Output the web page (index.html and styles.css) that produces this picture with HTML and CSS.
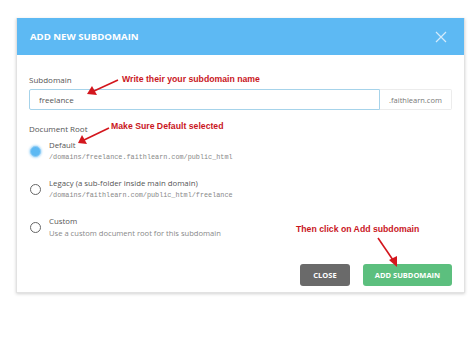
FILE: index.html
```html
<!DOCTYPE html>
<html lang="en">
<head>
    <meta charset="UTF-8">
    <meta name="viewport" content="width=device-width, initial-scale=1.0">
    <title>Add New Subdomain</title>
    <link rel="stylesheet" href="styles.css">
</head>
<body>
    <div class="page">
        <div class="modal">
            <div class="modal-header">
                <h2>Add New Subdomain</h2>
                <svg class="close-icon" width="12" height="12" viewBox="0 0 12 12">
                    <path d="M1 1 L11 11 M11 1 L1 11" stroke="#d4ebfb" stroke-width="1.2" fill="none"/>
                </svg>
            </div>
            <div class="modal-body">
                <label class="field-label" for="subdomain">Subdomain</label>
                <div class="input-group">
                    <input type="text" id="subdomain" value="freelance">
                    <span class="suffix">.faithlearn.com</span>
                </div>

                <div class="field-label root-label">Document Root</div>
                <div class="options">
                    <div class="option">
                        <span class="radio checked"></span>
                        <div class="option-text">
                            <div class="option-title">Default</div>
                            <div class="option-path">/domains/freelance.faithlearn.com/public_html</div>
                        </div>
                    </div>
                    <div class="option">
                        <span class="radio"></span>
                        <div class="option-text">
                            <div class="option-title">Legacy (a sub-folder inside main domain)</div>
                            <div class="option-path">/domains/faithlearn.com/public_html/freelance</div>
                        </div>
                    </div>
                    <div class="option">
                        <span class="radio"></span>
                        <div class="option-text">
                            <div class="option-title">Custom</div>
                            <div class="option-desc">Use a custom document root for this subdomain</div>
                        </div>
                    </div>
                </div>

                <div class="modal-footer">
                    <button class="btn btn-close">CLOSE</button>
                    <button class="btn btn-add">ADD SUBDOMAIN</button>
                </div>
            </div>
        </div>

        <!-- annotations drawn over the screenshot -->
        <div class="note note-1">Write their your subdomain name</div>
        <div class="note note-2">Make Sure Default selected</div>
        <div class="note note-3">Then click on Add subdomain</div>
        <svg class="arrows" width="474" height="355" viewBox="0 0 474 355">
            <g stroke="#d3161d" stroke-width="1.6" fill="#d3161d">
                <line x1="118" y1="80" x2="94" y2="91"/>
                <line x1="109" y1="128" x2="84" y2="140"/>
                <line x1="378" y1="238" x2="393" y2="260"/>
            </g>
            <g fill="#d3161d">
                <polygon points="87,94 92,86 97,95"/>
                <polygon points="78,143 82,135 87,144"/>
                <polygon points="397,267 389,260 397,256"/>
            </g>
        </svg>
    </div>
</body>
</html>
```

FILE: styles.css
```css
body {
    margin: 0;
    background-color: #fff;
    font-family: 'Open Sans', Arial, sans-serif;
    color: #555;
}
.page {
    position: relative;
    width: 474px;
    height: 355px;
    padding: 18px 0 0 16px;
    box-sizing: border-box;
}
.modal {
    width: 449px;
    background: #fff;
    border: 1px solid #e2e2e2;
    border-top: none;
    box-shadow: 0 1px 3px rgba(0, 0, 0, 0.18);
    box-sizing: border-box;
}
.modal-header {
    height: 37px;
    background-color: #5db9f3;
    display: flex;
    align-items: center;
    justify-content: space-between;
    padding: 0 17px 0 13px;
}
.modal-header h2 {
    margin: 0;
    font-size: 9.6px;
    font-weight: 700;
    text-transform: uppercase;
    color: #fff;
}
.modal-body {
    padding: 19px 12px 6px 12px;
}
.field-label {
    display: block;
    font-size: 8px;
    line-height: 11px;
    color: #555;
    margin-bottom: 4px;
}
.input-group {
    display: flex;
    height: 21px;
}
.input-group input {
    flex: 1;
    height: 21px;
    box-sizing: border-box;
    border: 1px solid #a6d3ea;
    border-radius: 2px 0 0 2px;
    padding: 0 9px;
    font-family: 'Open Sans', Arial, sans-serif;
    font-size: 8px;
    color: #555;
    outline: none;
}
.suffix {
    width: 72px;
    box-sizing: border-box;
    border: 1px solid #ececec;
    border-left: none;
    border-radius: 0 2px 2px 0;
    font-size: 7.5px;
    color: #777;
    display: flex;
    align-items: center;
    justify-content: center;
}
.root-label {
    margin-top: 13px;
}
.options {
    display: flex;
    flex-direction: column;
    gap: 14px;
    margin-top: 5px;
}
.option {
    display: flex;
    align-items: center;
    gap: 8px;
    padding-left: 1px;
}
.radio {
    width: 9px;
    height: 9px;
    border: 1px solid #666;
    border-radius: 50%;
    flex-shrink: 0;
}
.radio.checked {
    border-color: #8fcdf5;
    background-color: #5db9f3;
    box-shadow: 0 0 2px 1px rgba(93, 185, 243, 0.45);
}
.option-title {
    font-size: 7.8px;
    line-height: 12px;
    color: #555;
}
.option-path {
    font-family: 'Liberation Mono', 'DejaVu Sans Mono', monospace;
    font-size: 6.8px;
    line-height: 12px;
    color: #888;
}
.option-desc {
    font-size: 7.6px;
    line-height: 12px;
    color: #888;
}
.modal-footer {
    display: flex;
    justify-content: flex-end;
    gap: 13px;
    margin-top: 25px;
}
.btn {
    height: 22px;
    border: none;
    border-radius: 3px;
    font-family: 'Open Sans', Arial, sans-serif;
    font-size: 7.5px;
    font-weight: 700;
    color: #fff;
    cursor: pointer;
}
.btn-close {
    width: 50px;
    background-color: #6a6a6a;
}
.btn-add {
    width: 89px;
    background-color: #5cbf7e;
}
.note {
    position: absolute;
    font-family: 'Liberation Sans', Arial, sans-serif;
    font-weight: 700;
    font-size: 8.7px;
    line-height: 11px;
    color: #c9161d;
    white-space: nowrap;
}
.note-1 {
    left: 122px;
    top: 74px;
}
.note-2 {
    left: 111px;
    top: 121px;
}
.note-3 {
    left: 296px;
    top: 224px;
}
.arrows {
    position: absolute;
    left: 0;
    top: 0;
    pointer-events: none;
}
```
